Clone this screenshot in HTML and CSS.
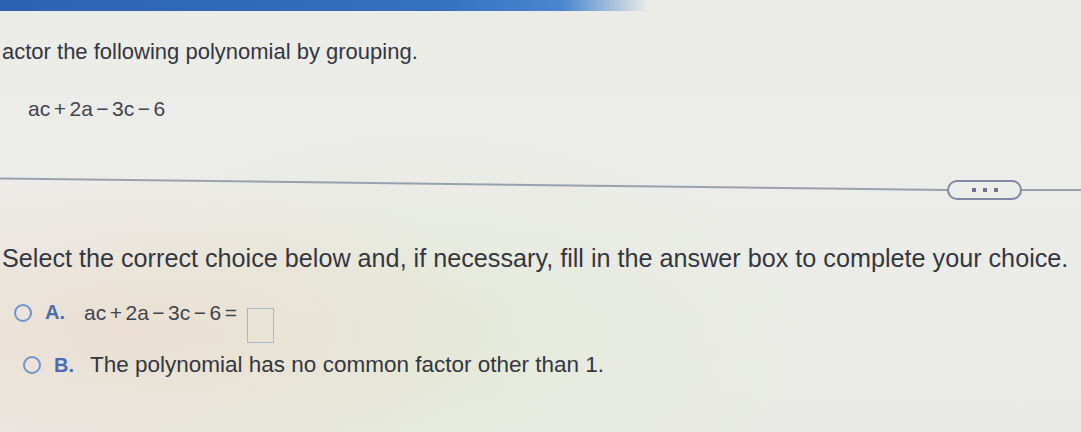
FILE: index.html
```html
<!DOCTYPE html>
<html lang="en">
<head>
<meta charset="utf-8">
<title>Factor by grouping</title>
<link rel="stylesheet" href="styles.css">
</head>
<body>
<div class="page">
  <div class="topbar"></div>
  <p class="title">actor the following polynomial by grouping.</p>
  <p class="expr">ac<span class="op">+</span>2a<span class="op">−</span>3c<span class="op">−</span>6</p>
  <div class="divider">
    <span class="rule rule-left"></span>
    <span class="more"><i></i><i></i><i></i></span>
    <span class="rule rule-right"></span>
  </div>
  <p class="instructions">Select the correct choice below and, if necessary, fill in the answer box to complete your choice.</p>
  <div class="choices">
    <div class="choice choice-a">
      <span class="radio"></span>
      <span class="letter">A.</span>
      <span class="math">ac<span class="op">+</span>2a<span class="op">−</span>3c<span class="op">−</span>6<span class="op op-eq">=</span></span>
      <span class="answer-box"></span>
    </div>
    <div class="choice choice-b">
      <span class="radio"></span>
      <span class="letter">B.</span>
      <span class="text">The polynomial has no common factor other than 1.</span>
    </div>
  </div>
</div>
</body>
</html>
```

FILE: styles.css
```css
html, body {
  margin: 0;
  padding: 0;
}
body {
  width: 1081px;
  height: 432px;
  overflow: hidden;
  background:
    radial-gradient(ellipse 420px 160px at 120px 330px, rgba(236, 214, 196, 0.55), rgba(236, 214, 196, 0)),
    radial-gradient(ellipse 380px 200px at 420px 330px, rgba(222, 234, 205, 0.5), rgba(222, 234, 205, 0)),
    linear-gradient(180deg, #ebebe8 0%, #ecece9 40%, #e9eae5 100%);
  font-family: "Liberation Sans", Arial, sans-serif;
  color: #34373f;
}
.page {
  height: 432px;
}
.topbar {
  height: 11px;
  background: linear-gradient(90deg, #2d63b0 0%, #3370bd 40%, #4a86cf 52%, rgba(120, 160, 215, 0) 60%);
}
.title {
  margin: 28px 0 0 2px;
  font-size: 22px;
  line-height: 25px;
}
.expr {
  margin: 33px 0 0 28px;
  font-size: 21px;
  line-height: 24px;
  color: #42454e;
}
.op {
  padding: 0 3.5px;
}
.divider {
  display: flex;
  align-items: center;
  margin-top: 59px;
  height: 20px;
}
.rule {
  height: 2px;
  background: #9aa1ae;
}
.rule-left {
  flex: 1;
  transform: rotate(0.7deg);
  transform-origin: right center;
}
.rule-right {
  width: 59px;
}
.more {
  box-sizing: border-box;
  width: 75px;
  height: 20px;
  border: 2px solid #7f89a3;
  border-radius: 10px;
  display: flex;
  align-items: center;
  justify-content: center;
  gap: 7px;
}
.more i {
  width: 4px;
  height: 4px;
  background: #6a7390;
}
.instructions {
  margin: 44px 0 0 2px;
  font-size: 25.2px;
  line-height: 29px;
}
.choices {
  margin-top: 22px;
  display: flex;
  flex-direction: column;
  gap: 22px;
}
.choice {
  display: flex;
  align-items: center;
}
.choice-a {
  margin-left: 14px;
}
.choice-b {
  margin-left: 23px;
}
.radio {
  box-sizing: border-box;
  width: 18px;
  height: 18px;
  border: 2px solid #7193cc;
  border-radius: 50%;
}
.letter {
  margin-left: 13px;
  font-weight: bold;
  font-size: 20px;
  color: #4a6db0;
}
.choice-a .math {
  margin-left: 19px;
  font-size: 21px;
  color: #42454e;
}
.op-eq {
  padding-right: 0;
}
.answer-box {
  box-sizing: border-box;
  width: 27px;
  height: 35px;
  margin-left: 10px;
  border: 1px solid #a9b6d0;
  transform: translateY(13px);
}
.choice-b .text {
  margin-left: 16px;
  font-size: 22.5px;
  line-height: 26px;
}
```
